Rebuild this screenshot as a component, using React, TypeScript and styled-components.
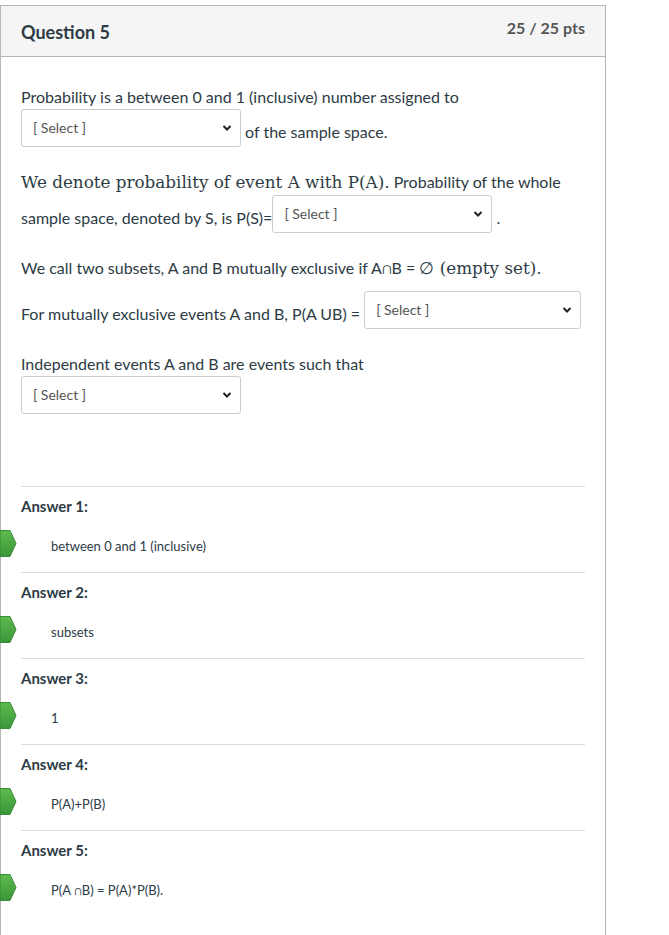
import React from "react";
import styled, { createGlobalStyle } from "styled-components";

const GlobalStyle = createGlobalStyle`
  body {
    margin: 0;
    background: #ffffff;
    font-family: Lato, "Liberation Sans", sans-serif;
    color: #2d3b45;
  }
`;

const Card = styled.div`
  margin-top: 5px;
  width: 604px;
  border: 1px solid #b6b6b6;
  border-bottom: none;
  background: #ffffff;
`;

const Header = styled.div`
  display: flex;
  justify-content: space-between;
  align-items: center;
  height: 50px;
  padding: 0 20px;
  background: #f5f5f5;
  border-bottom: 1px solid #b6b6b6;
`;

const Title = styled.h2`
  margin: 1px 0 0;
  font-size: 18px;
  font-weight: 700;
  color: #2d3b45;
`;

const Points = styled.div`
  margin-top: -7px;
  font-size: 16px;
  font-weight: 700;
  color: #555555;
`;

const Body = styled.div`
  padding: 28px 20px 60px;
`;

const Para = styled.p<{ gap?: number }>`
  margin: 0 0 ${(p) => p.gap ?? 12}px;
  font-size: 16px;
  line-height: 1.5;
`;

const Math = styled.span`
  font-family: "DejaVu Serif", "Liberation Serif", serif;
  font-size: 16.8px;
`;

const SelectBox = styled.span<{ w?: number }>`
  display: inline-flex;
  align-items: center;
  justify-content: space-between;
  box-sizing: border-box;
  width: ${(p) => p.w ?? 220}px;
  height: 38px;
  padding: 0 8px 2px 11px;
  border: 1px solid #c7cdd1;
  border-radius: 3px;
  background: #ffffff;
  vertical-align: 5px;
  font-size: 14px;
  color: #555555;
`;

const Chevron = styled.svg`
  width: 10px;
  height: 10px;
  margin-top: 2px;
`;

const Spacer = styled.div`
  height: 72px;
`;

const AnswerBlock = styled.div`
  border-top: 1px solid #dcdcdc;
  padding: 9px 0 16px;
`;

const AnswerLabel = styled.div`
  font-size: 15px;
  font-weight: 700;
  line-height: 20px;
`;

const AnswerRow = styled.div`
  position: relative;
  margin-top: 20px;
  padding-left: 30px;
  font-size: 13px;
  line-height: 20px;
`;

const Marker = styled.svg`
  position: absolute;
  left: -21px;
  top: -6px;
  width: 17px;
  height: 27px;
`;

const Select = ({ w }: { w?: number }) => (
  <SelectBox w={w}>
    <span>[ Select ]</span>
    <Chevron viewBox="0 0 10 10">
      <path d="M1.5 3 L5 6.5 L8.5 3" fill="none" stroke="#222" strokeWidth="2" />
    </Chevron>
  </SelectBox>
);

const answers = [
  "between 0 and 1 (inclusive)",
  "subsets",
  "1",
  "P(A)+P(B)",
  "P(A \u2229B) = P(A)*P(B).",
];

export default function App() {
  return (
    <>
      <GlobalStyle />
      <Card>
        <Header>
          <Title>Question 5</Title>
          <Points>25 / 25 pts</Points>
        </Header>
        <Body>
          <Para gap={23}>
            Probability is a between 0 and 1 (inclusive) number assigned to{" "}
            <Select /> of the sample space.
          </Para>
          <Para gap={23}>
            <Math>
              We denote probability of event A with P(A).
            </Math>{" "}
            Probability of the whole sample space, denoted by S, is P(S)=
            <Select /> .
          </Para>
          <Para gap={10}>
            We call two subsets, A and B mutually exclusive if A{"\u2229"}B ={" "}
            <Math>{"\u2205"} (empty set).</Math>
          </Para>
          <Para gap={23}>
            For mutually exclusive events A and B, P(A UB) = <Select w={217} />
          </Para>
          <Para gap={0}>
            Independent events A and B are events such that <Select />
          </Para>
          <Spacer />
          {answers.map((a, i) => (
            <AnswerBlock key={i}>
              <AnswerLabel>Answer {i + 1}:</AnswerLabel>
              <AnswerRow>
                <Marker viewBox="0 0 17 27">
                  <defs>
                    <linearGradient id={`g${i}`} x1="0" y1="0" x2="0" y2="1">
                      <stop offset="0" stopColor="#5dbb4e" />
                      <stop offset="1" stopColor="#3a963a" />
                    </linearGradient>
                  </defs>
                  <path
                    d="M0 0.5 H10 L16 13.5 L10 26.5 H0 Z"
                    fill={`url(#g${i})`}
                    stroke="#3a8a37"
                    strokeWidth="1"
                  />
                </Marker>
                {a}
              </AnswerRow>
            </AnswerBlock>
          ))}
        </Body>
      </Card>
    </>
  );
}
